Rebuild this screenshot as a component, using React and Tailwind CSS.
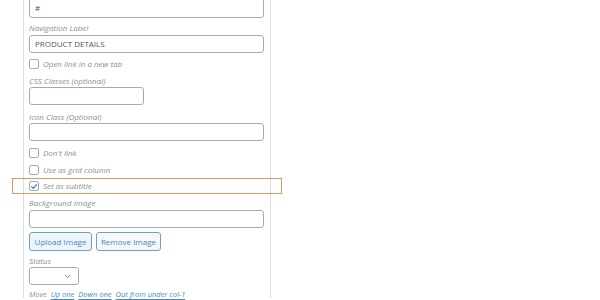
import React from 'react';
import { ChevronDown } from 'lucide-react';

const font = { fontFamily: '"Open Sans", "Noto Sans", sans-serif' };

const Label = ({ children, className = '' }) => (
  <div className={`text-[8px] leading-[12px] italic text-[#8c8f94] ${className}`}>{children}</div>
);

const Input = ({ value = '', className = '' }) => (
  <div className={`h-[18px] border border-[#a7aaad] rounded-[3px] bg-white flex items-center px-[5px] text-[8px] text-[#50575e] ${className}`}>
    {value}
  </div>
);

const Check = ({ checked }) => (
  <span className="w-[10px] h-[10px] border border-[#a7aaad] rounded-[2px] bg-white flex items-center justify-center shrink-0">
    {checked && (
      <svg viewBox="0 0 10 10" className="w-[9px] h-[9px]">
        <path d="M2 5.2 L4.1 7.3 L8.2 2.6" fill="none" stroke="#3582c4" strokeWidth="1.5" strokeLinecap="round" strokeLinejoin="round" />
      </svg>
    )}
  </span>
);

const CheckRow = ({ label, checked, className = '' }) => (
  <div className={`flex items-center gap-[4px] h-[10px] ${className}`}>
    <Check checked={checked} />
    <span className="text-[8px] italic text-[#8c8f94] leading-[10px]">{label}</span>
  </div>
);

export default function App() {
  return (
    <div className="w-[600px] h-[300px] bg-white overflow-hidden" style={font}>
      <div className="ml-[23px] w-[248px] h-[300px] border-x border-[#dcdcde] pl-[5px]">
        <Input value="#" className="-mt-[2px] h-[20px] w-[235px]" />
        <Label className="mt-[4px]">Navigation Label</Label>
        <Input value="PRODUCT DETAILS" className="w-[235px] mt-[1px]" />
        <CheckRow label="Open link in a new tab" className="mt-[6px]" />
        <Label className="mt-[6px]">CSS Classes (optional)</Label>
        <Input className="w-[115px]" />
        <Label className="mt-[6px]">Icon Class (Optional)</Label>
        <Input className="w-[235px]" />
        <CheckRow label="Don't link" className="mt-[7px]" />
        <CheckRow label="Use as grid column" className="mt-[7px]" />
        <div className="-ml-[17px] w-[270px] h-[16px] mt-[3px] border border-[#d49a63] flex items-center pl-[16px] gap-[4px]">
          <Check checked />
          <span className="text-[8px] italic text-[#8c8f94] leading-[10px]">Set as subtitle</span>
        </div>
        <Label className="mt-[3px]">Background Image</Label>
        <Input className="w-[235px] mt-[1px]" />
        <div className="flex gap-[4px] mt-[4px]">
          <button className="h-[19px] w-[63px] whitespace-nowrap border border-[#6aa3d0] rounded-[3px] bg-[#eef4f9] text-[8px] text-[#4a8bc0] leading-none">
            Upload Image
          </button>
          <button className="h-[19px] w-[65px] whitespace-nowrap border border-[#6aa3d0] rounded-[3px] bg-[#f6f7f7] text-[8px] text-[#4a8bc0] leading-none">
            Remove Image
          </button>
        </div>
        <Label className="mt-[4px]">Status</Label>
        <div className="w-[50px] h-[18px] border border-[#a7aaad] rounded-[3px] bg-white flex items-center justify-end pr-[6px]">
          <ChevronDown size={9} strokeWidth={2} className="text-[#50575e]" />
        </div>
        <div className="mt-[3px] text-[7.5px] leading-[12px] italic text-[#8c8f94] flex gap-[4px]">
          <span>Move</span>
          <span className="text-[#4a8bc0] underline underline-offset-2">Up one</span>
          <span className="text-[#4a8bc0] underline underline-offset-2">Down one</span>
          <span className="text-[#4a8bc0] underline underline-offset-2">Out from under col-1</span>
        </div>
      </div>
    </div>
  );
}
